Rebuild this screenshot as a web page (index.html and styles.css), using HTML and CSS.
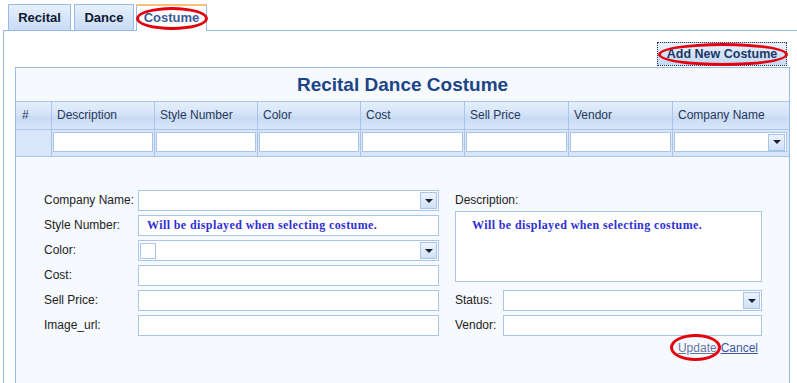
FILE: index.html
```html
<!DOCTYPE html>
<html>

<head lang="en">
    <meta charset="UTF-8">
    <title>Recital Dance Costume</title>
    <link rel="stylesheet" href="styles.css">
</head>

<body>
    <div class="tabs">
        <a class="tab tab-recital" href="javascript:;">Recital</a>
        <a class="tab tab-dance" href="javascript:;">Dance</a>
        <a class="tab tab-active" href="javascript:;">Costume<span class="mark mark-tab"></span></a>
    </div>
    <div class="panel">
        <div class="toolbar">
            <button class="add-btn" type="button">Add New Costume<span class="mark mark-add"></span></button>
        </div>
        <div class="grid">
            <div class="grid-title">Recital Dance Costume</div>
            <div class="grid-row grid-head">
                <div class="cell cell-num">#</div>
                <div class="cell">Description</div>
                <div class="cell">Style Number</div>
                <div class="cell">Color</div>
                <div class="cell">Cost</div>
                <div class="cell">Sell Price</div>
                <div class="cell">Vendor</div>
                <div class="cell">Company Name</div>
            </div>
            <div class="grid-row grid-filter">
                <div class="cell cell-num"></div>
                <div class="cell"><input class="filter-input" type="text"></div>
                <div class="cell"><input class="filter-input" type="text"></div>
                <div class="cell"><input class="filter-input" type="text"></div>
                <div class="cell"><input class="filter-input" type="text"></div>
                <div class="cell"><input class="filter-input" type="text"></div>
                <div class="cell"><input class="filter-input" type="text"></div>
                <div class="cell">
                    <div class="combo combo-filter"><span class="trigger"></span></div>
                </div>
            </div>
            <!-- 编辑表单 -->
            <div class="edit-form">
                <div class="form-left">
                    <label>Company Name:</label>
                    <div class="combo"><span class="trigger"></span></div>
                    <label>Style Number:</label>
                    <input class="form-input hint" type="text" value="Will be displayed when selecting costume.">
                    <label>Color:</label>
                    <div class="combo"><span class="swatch"></span><span class="trigger"></span></div>
                    <label>Cost:</label>
                    <input class="form-input" type="text">
                    <label>Sell Price:</label>
                    <input class="form-input" type="text">
                    <label>Image_url:</label>
                    <input class="form-input" type="text">
                </div>
                <div class="form-right">
                    <label class="desc-label">Description:</label>
                    <textarea class="desc-text hint">Will be displayed when selecting costume.</textarea>
                    <div class="form-pair">
                        <label>Status:</label>
                        <div class="combo"><span class="trigger"></span></div>
                        <label>Vendor:</label>
                        <input class="form-input" type="text">
                    </div>
                    <div class="form-links">
                        <a class="link-update" href="javascript:;">Update<span class="mark mark-update"></span></a><a class="link-cancel" href="javascript:;">Cancel</a>
                    </div>
                </div>
            </div>
        </div>
    </div>
</body>

</html>
```

FILE: styles.css
```css
* {
    padding: 0px;
    margin: 0px;
    box-sizing: border-box;
}

body {
    font-family: "Liberation Sans", Arial, sans-serif;
    font-size: 12px;
    color: #222222;
    background: #ffffff;
    width: 797px;
    height: 383px;
    overflow: hidden;
}

/* 标签页 */
.tabs {
    display: flex;
    align-items: flex-end;
    height: 26px;
    margin: 4px 0px 0px 8px;
    position: relative;
    z-index: 1;
}

.tab {
    height: 26px;
    border: #99bbe8 solid 1px;
    border-bottom: none;
    background: linear-gradient(#e7f0fc, #d3e3f8 60%, #c9dcf6);
    font-size: 13px;
    font-weight: bold;
    line-height: 25px;
    text-align: center;
    color: #0e1a30;
    text-decoration: none;
}

.tab-recital {
    width: 63px;
    margin-right: 3px;
}

.tab-dance {
    width: 60px;
    margin-right: 2px;
}

.tab-active {
    width: 71px;
    height: 27px;
    margin-bottom: -1px;
    border-top: #f9c27a solid 2px;
    background: #ffffff;
    color: #3b5a9a;
    line-height: 23px;
    position: relative;
}

/* 红色圈注 */
.mark {
    position: absolute;
    border: #e4000c solid 3px;
    border-radius: 50%;
    pointer-events: none;
}

.mark-tab {
    left: -1px;
    top: 1px;
    width: 72px;
    height: 23px;
}

.mark-add {
    left: 0px;
    top: 0px;
    width: 130px;
    height: 23px;
}

.mark-update {
    left: -8px;
    top: -7px;
    width: 51px;
    height: 27px;
}

/* 面板 */
.panel {
    margin-left: 3px;
    height: 400px;
    border-top: #99bbe8 solid 1px;
    border-left: #99bbe8 solid 1px;
    padding: 11px 0px 0px 11px;
}

.toolbar {
    width: 775px;
    display: flex;
    justify-content: flex-end;
    padding-right: 3px;
    margin-bottom: 1px;
}

.add-btn {
    width: 130px;
    height: 24px;
    border: #22334f dotted 1px;
    background: linear-gradient(#eaf2fd, #d4e4f9 50%, #c4d9f5);
    font-family: "Liberation Sans", Arial, sans-serif;
    font-size: 12.5px;
    font-weight: bold;
    color: #1d3764;
    position: relative;
}

.grid {
    width: 775px;
    height: 340px;
    border: #99bbe8 solid 1px;
    background: #f6f9fe;
}

.grid-title {
    height: 33px;
    line-height: 33px;
    text-align: center;
    font-size: 19px;
    font-weight: bold;
    color: #1b4586;
}

.grid-row {
    display: grid;
    grid-template-columns: 36px 103px 103px 103px 104px 104px 104px 1fr;
    border-top: #a9c5eb solid 1px;
    border-bottom: #a9c5eb solid 1px;
}

.cell {
    border-right: #a9c5eb solid 1px;
    padding-left: 5px;
}

.cell:last-child {
    border-right: none;
}

.cell-num {
    padding-left: 6px;
}

.grid-head {
    height: 29px;
    background: linear-gradient(#e5eefb, #d6e5f9 40%, #c8dbf5 60%, #d7e6f9);
}

.grid-head .cell {
    line-height: 27px;
    color: #26385a;
}

.grid-filter {
    height: 27px;
    border-top: none;
    background: #d9e6f9;
}

.grid-filter .cell {
    padding: 2px 1px 0px 1px;
}

.filter-input {
    display: block;
    width: 100%;
    height: 20px;
    border: #a9c5eb solid 1px;
    background: #ffffff;
    outline: none;
}

/* 下拉框 */
.combo {
    display: flex;
    align-items: center;
    height: 21px;
    border: #a9c5eb solid 1px;
    background: #ffffff;
    padding: 0px 1px;
}

.combo-filter {
    height: 20px;
    margin-right: 1px;
}

.trigger {
    margin-left: auto;
    width: 17px;
    height: 17px;
    border: #a9c5eb solid 1px;
    background: linear-gradient(#eef4fd, #cfe0f7);
    display: flex;
    align-items: center;
    justify-content: center;
}

.trigger::after {
    content: "";
    border-left: 4px solid transparent;
    border-right: 4px solid transparent;
    border-top: 4px solid #1a2232;
}

.swatch {
    width: 16px;
    height: 16px;
    border: #a9c5eb solid 1px;
    background: #ffffff;
}

/* 编辑表单 */
.edit-form {
    display: flex;
    align-items: flex-start;
    gap: 16px;
    padding: 33px 0px 0px 28px;
}

.form-left {
    display: grid;
    grid-template-columns: 94px 301px;
    row-gap: 4px;
}

.form-left label,
.form-pair label {
    line-height: 21px;
    color: #222222;
}

.form-input {
    display: block;
    width: 100%;
    height: 21px;
    border: #a9c5eb solid 1px;
    background: #ffffff;
    padding: 0px 8px;
    outline: none;
}

.hint {
    font-family: "Liberation Serif", "Times New Roman", serif;
    font-size: 12px;
    font-weight: bold;
    letter-spacing: 0.4px;
    color: #3030d4;
}

.form-right {
    width: 307px;
}

.desc-label {
    display: block;
    height: 21px;
    line-height: 21px;
}

.desc-text {
    display: block;
    width: 307px;
    height: 71px;
    border: #a9c5eb solid 1px;
    background: #ffffff;
    padding: 6px 16px;
    resize: none;
    outline: none;
}

.form-pair {
    display: grid;
    grid-template-columns: 48px 259px;
    row-gap: 4px;
    margin-top: 8px;
}

.form-links {
    display: flex;
    justify-content: flex-end;
    gap: 4px;
    padding-right: 4px;
    margin-top: 5px;
    line-height: 14px;
}

.form-links a {
    color: #3a56a0;
    text-decoration: underline;
}

.form-links .link-update {
    color: #6677a3;
    position: relative;
}
```
